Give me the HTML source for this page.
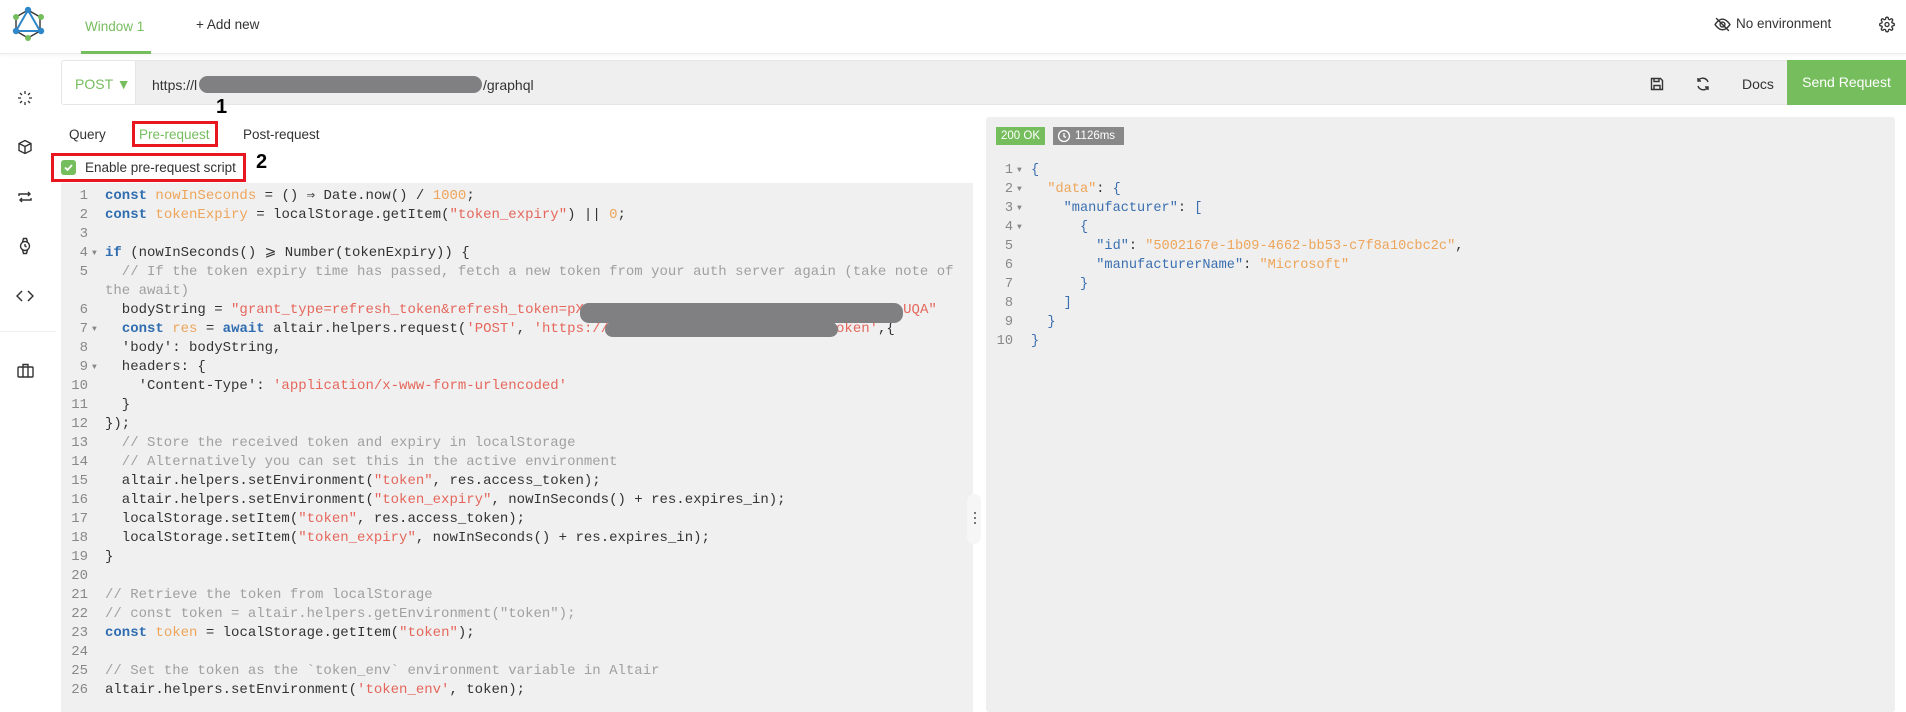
<!DOCTYPE html>
<html><head><meta charset="utf-8"><style>
*{box-sizing:border-box;margin:0;padding:0}
body{width:1906px;height:712px;overflow:hidden;background:#fff;font-family:"Liberation Sans",sans-serif;color:#333;position:relative}
.a{position:absolute}
.code{font-family:"Liberation Mono",monospace;font-size:14px;color:#333}
.r{position:relative;height:19px;line-height:19px;white-space:pre;padding-left:44px}
.k{color:#2f6db0;font-weight:bold}.v{color:#eea55a}.s{color:#e5675c}.c{color:#a0a0a0}.n{color:#eea55a}.b{color:#3b6fb0}
.ln{position:absolute;left:0;width:27px;text-align:right;color:#888}
.ar{position:absolute;left:31px;color:#888;font-size:8px}
.red{border:3px solid #e8161f;position:absolute}
.blk{background:#808083;position:absolute;border-radius:9px}
</style></head><body>
<div class="a" style="left:0;top:0;width:1906px;height:54px;border-bottom:1px solid #ececec;box-shadow:0 2px 4px rgba(0,0,0,.04)"></div>
<svg class="a" style="left:0;top:0" width="60" height="50">
<polygon points="28,10 40,17 40,31 28,38 16,31 16,17" fill="none" stroke="#333" stroke-width="1.4"/>
<polygon points="28,10 40,31 16,31" fill="none" stroke="#2f86c8" stroke-width="2"/>
<circle cx="28" cy="10" r="3.2" fill="#2f86c8"/><circle cx="16" cy="31" r="3.2" fill="#2f86c8"/><circle cx="41" cy="31" r="3.2" fill="#2f86c8"/>
<circle cx="16" cy="17" r="3" fill="#76bd5e"/><circle cx="41" cy="17" r="3" fill="#76bd5e"/><circle cx="28" cy="38" r="3" fill="#76bd5e"/>
</svg>
<div class="a" style="left:85px;top:19px;font-size:13.5px;color:#76bd5e">Window 1</div>
<div class="a" style="left:81px;top:51px;width:70px;height:3px;background:#76bd5e"></div>
<div class="a" style="left:196px;top:17px;font-size:13.5px;color:#333">+ Add new</div>
<svg class="a" style="left:1714px;top:16px" width="17" height="17" viewBox="0 0 16 16" fill="none" stroke="#333" stroke-width="1.3"><path d="M1 8s3-5 7-5 7 5 7 5-3 5-7 5-7-5-7-5z"/><circle cx="8" cy="8" r="2.3"/><path d="M2 2l12 12"/></svg>
<div class="a" style="left:1736px;top:16px;font-size:13.5px">No environment</div>
<svg class="a" style="left:1879px;top:16px" width="16" height="17" viewBox="0 0 24 24" fill="none" stroke="#333" stroke-width="2"><circle cx="12" cy="12" r="3"/><path d="M19.4 15a1.7 1.7 0 0 0 .3 1.8l.1.1a2 2 0 1 1-2.8 2.8l-.1-.1a1.7 1.7 0 0 0-1.8-.3 1.7 1.7 0 0 0-1 1.5V21a2 2 0 1 1-4 0v-.1a1.7 1.7 0 0 0-1.1-1.5 1.7 1.7 0 0 0-1.8.3l-.1.1a2 2 0 1 1-2.8-2.8l.1-.1a1.7 1.7 0 0 0 .3-1.8 1.7 1.7 0 0 0-1.5-1H3a2 2 0 1 1 0-4h.1a1.7 1.7 0 0 0 1.5-1.1 1.7 1.7 0 0 0-.3-1.8l-.1-.1a2 2 0 1 1 2.8-2.8l.1.1a1.7 1.7 0 0 0 1.8.3H9a1.7 1.7 0 0 0 1-1.5V3a2 2 0 1 1 4 0v.1a1.7 1.7 0 0 0 1 1.5 1.7 1.7 0 0 0 1.8-.3l.1-.1a2 2 0 1 1 2.8 2.8l-.1.1a1.7 1.7 0 0 0-.3 1.8V9a1.7 1.7 0 0 0 1.5 1H21a2 2 0 1 1 0 4h-.1a1.7 1.7 0 0 0-1.5 1z"/></svg>
<svg class="a" style="left:17px;top:90px" width="16" height="16" viewBox="0 0 16 16" stroke="#333" stroke-width="1.3"><path d="M8 1v3M8 12v3M1 8h3M12 8h3M3 3l2 2M11 11l2 2M3 13l2-2M11 5l2-2"/></svg>
<svg class="a" style="left:17px;top:139px" width="16" height="16" viewBox="0 0 16 16" fill="none" stroke="#333" stroke-width="1.4"><path d="M8 1.5l6 3v7l-6 3-6-3v-7z M2 4.5l6 3 6-3 M8 7.5v7"/></svg>
<svg class="a" style="left:17px;top:189px" width="16" height="16" viewBox="0 0 16 16" fill="none" stroke="#333" stroke-width="1.4"><path d="M2 7V5h11M11 3l2 2-2 2M14 9v2H3M5 13l-2-2 2-2"/></svg>
<svg class="a" style="left:18px;top:237px" width="14" height="18" viewBox="0 0 14 18" fill="none" stroke="#333" stroke-width="1.4"><circle cx="7" cy="9" r="4.5"/><path d="M7 7v2l1.5 1M4.5 5l1-3.5h3l1 3.5M4.5 13l1 3.5h3l1-3.5"/></svg>
<svg class="a" style="left:16px;top:290px" width="18" height="12" viewBox="0 0 18 12" fill="none" stroke="#333" stroke-width="1.5"><path d="M6 1L1 6l5 5M12 1l5 5-5 5"/></svg>
<div class="a" style="left:0;top:331px;width:56px;height:1px;background:#eee"></div>
<svg class="a" style="left:17px;top:363px" width="17" height="15" viewBox="0 0 17 15" fill="none" stroke="#333" stroke-width="1.4"><rect x="1" y="4" width="15" height="10" rx="1"/><path d="M6 4V1.5h5V4M6 4v10M11 4v10"/></svg>
<div class="a" style="left:61px;top:60px;width:1845px;height:45px;background:#efefef;border:1px solid #e6e6e6;border-radius:3px 0 0 3px"></div>
<div class="a" style="left:61px;top:60px;width:75px;height:45px;background:#fff;border:1px solid #e6e6e6;border-radius:3px 0 0 3px"></div>
<div class="a" style="left:75px;top:76px;font-size:14px;color:#76bd5e">POST ▼</div>
<div class="a" style="left:152px;top:77px;font-size:14px;color:#333">https://l</div>
<div class="blk" style="left:199px;top:76px;width:283px;height:17px"></div>
<div class="a" style="left:483px;top:77px;font-size:14px;color:#333">/graphql</div>
<svg class="a" style="left:1650px;top:77px" width="14" height="14" viewBox="0 0 14 14" fill="none" stroke="#333" stroke-width="1.4"><path d="M1.5 1.5h9l2 2v9h-11z M4 1.5v3h5v-3 M4 12.5v-4h6v4"/></svg>
<svg class="a" style="left:1695px;top:76px" width="16" height="16" viewBox="0 0 16 16" fill="none" stroke="#333" stroke-width="1.4"><path d="M13 6A5.5 5.5 0 0 0 3 5M3 2v3h3M3 10a5.5 5.5 0 0 0 10 1M13 14v-3h-3"/></svg>
<div class="a" style="left:1742px;top:76px;font-size:14px">Docs</div>
<div class="a" style="left:1787px;top:60px;width:119px;height:45px;background:#76bd5e;color:#fff;font-size:14px;text-align:center;line-height:45px">Send Request</div>
<div class="a" style="left:69px;top:127px;font-size:13.5px">Query</div>
<div class="a" style="left:139px;top:127px;font-size:13.5px;color:#76bd5e">Pre-request</div>
<div class="a" style="left:243px;top:127px;font-size:13.5px">Post-request</div>
<div class="red" style="left:132px;top:121px;width:86px;height:26px"></div>
<div class="a" style="left:216px;top:96px;font-size:20px;font-weight:bold;color:#000">1</div>
<div class="red" style="left:51px;top:153px;width:195px;height:29px"></div>
<div class="a" style="left:256px;top:151px;font-size:20px;font-weight:bold;color:#000">2</div>
<div class="a" style="left:61px;top:160px;width:15px;height:15px;background:#76bd5e;border-radius:3px"></div>
<svg class="a" style="left:61px;top:160px" width="15" height="15"><path d="M4 7.5l2.5 2.5 4.5-5" fill="none" stroke="#fff" stroke-width="1.8"/></svg>
<div class="a" style="left:85px;top:160px;font-size:13.5px">Enable pre-request script</div>
<div class="a" style="left:61px;top:183px;width:912px;height:529px;background:#f0f0f0"></div>
<div class="a code" style="left:61px;top:187px;width:912px">
<div class="r"><span class="ln">1</span><span class="k">const</span> <span class="v">nowInSeconds</span> = () ⇒ Date.now() / <span class="n">1000</span>;</div>
<div class="r"><span class="ln">2</span><span class="k">const</span> <span class="v">tokenExpiry</span> = localStorage.getItem(<span class="s">"token_expiry"</span>) || <span class="n">0</span>;</div>
<div class="r"><span class="ln">3</span></div>
<div class="r"><span class="ln">4</span><span class="ar">▼</span><span class="k">if</span> (nowInSeconds() ⩾ Number(tokenExpiry)) {</div>
<div class="r"><span class="ln">5</span><span class="c">  // If the token expiry time has passed, fetch a new token from your auth server again (take note of</span></div>
<div class="r"><span class="c">the await)</span></div>
<div class="r"><span class="ln">6</span>  bodyString = <span class="s">"grant_type=refresh_token&amp;refresh_token=pX                                      UQA"</span></div>
<div class="r"><span class="ln">7</span><span class="ar">▼</span>  <span class="k">const</span> <span class="v">res</span> = <span class="k">await</span> altair.helpers.request(<span class="s">'POST'</span>, <span class="s">'https://                          token'</span>,{</div>
<div class="r"><span class="ln">8</span>  'body': bodyString,</div>
<div class="r"><span class="ln">9</span><span class="ar">▼</span>  headers: {</div>
<div class="r"><span class="ln">10</span>    'Content-Type': <span class="s">'application/x-www-form-urlencoded'</span></div>
<div class="r"><span class="ln">11</span>  }</div>
<div class="r"><span class="ln">12</span>});</div>
<div class="r"><span class="ln">13</span><span class="c">  // Store the received token and expiry in localStorage</span></div>
<div class="r"><span class="ln">14</span><span class="c">  // Alternatively you can set this in the active environment</span></div>
<div class="r"><span class="ln">15</span>  altair.helpers.setEnvironment(<span class="s">"token"</span>, res.access_token);</div>
<div class="r"><span class="ln">16</span>  altair.helpers.setEnvironment(<span class="s">"token_expiry"</span>, nowInSeconds() + res.expires_in);</div>
<div class="r"><span class="ln">17</span>  localStorage.setItem(<span class="s">"token"</span>, res.access_token);</div>
<div class="r"><span class="ln">18</span>  localStorage.setItem(<span class="s">"token_expiry"</span>, nowInSeconds() + res.expires_in);</div>
<div class="r"><span class="ln">19</span>}</div>
<div class="r"><span class="ln">20</span></div>
<div class="r"><span class="ln">21</span><span class="c">// Retrieve the token from localStorage</span></div>
<div class="r"><span class="ln">22</span><span class="c">// const token = altair.helpers.getEnvironment("token");</span></div>
<div class="r"><span class="ln">23</span><span class="k">const</span> <span class="v">token</span> = localStorage.getItem(<span class="s">"token"</span>);</div>
<div class="r"><span class="ln">24</span></div>
<div class="r"><span class="ln">25</span><span class="c">// Set the token as the `token_env` environment variable in Altair</span></div>
<div class="r"><span class="ln">26</span>altair.helpers.setEnvironment(<span class="s">'token_env'</span>, token);</div>
</div>
<div class="blk" style="left:580px;top:303px;width:323px;height:20px"></div>
<div class="blk" style="left:605px;top:322px;width:233px;height:15px;border-radius:8px"></div>
<div class="a" style="left:967px;top:494px;width:14px;height:50px;background:#f6f6f6;border-radius:7px"></div>
<div class="a" style="left:974px;top:512px;width:2px;height:2px;background:#777;box-shadow:0 5px 0 #777,0 10px 0 #777"></div>
<div class="a" style="left:986px;top:117px;width:909px;height:595px;background:#efefef;border-radius:3px"></div>
<div class="a" style="left:996px;top:127px;width:49px;height:18px;background:#76bd5e;color:#fff;font-size:11.5px;line-height:18px;text-align:center">200 OK</div>
<div class="a" style="left:1053px;top:127px;width:71px;height:18px;background:#888;color:#fff;font-size:11.5px;line-height:18px;padding-left:22px">1126ms</div>
<svg class="a" style="left:1057px;top:129px" width="14" height="14" viewBox="0 0 14 14" fill="none" stroke="#fff" stroke-width="1.3"><circle cx="7" cy="7" r="5.5"/><path d="M7 4v3.5l2 1"/></svg>
<div class="a code" style="left:986px;top:161px;font-size:13.6px">
<div class="r" style="padding-left:45px"><span class="ln">1</span><span class="ar">▼</span><span class="b">{</span></div>
<div class="r" style="padding-left:45px"><span class="ln">2</span><span class="ar">▼</span>  <span class="v">"data"</span>: <span class="b">{</span></div>
<div class="r" style="padding-left:45px"><span class="ln">3</span><span class="ar">▼</span>    <span class="b">"manufacturer"</span>: <span class="b">[</span></div>
<div class="r" style="padding-left:45px"><span class="ln">4</span><span class="ar">▼</span>      <span class="b">{</span></div>
<div class="r" style="padding-left:45px"><span class="ln">5</span>        <span class="b">"id"</span>: <span class="v">"5002167e-1b09-4662-bb53-c7f8a10cbc2c"</span>,</div>
<div class="r" style="padding-left:45px"><span class="ln">6</span>        <span class="b">"manufacturerName"</span>: <span class="v">"Microsoft"</span></div>
<div class="r" style="padding-left:45px"><span class="ln">7</span>      <span class="b">}</span></div>
<div class="r" style="padding-left:45px"><span class="ln">8</span>    <span class="b">]</span></div>
<div class="r" style="padding-left:45px"><span class="ln">9</span>  <span class="b">}</span></div>
<div class="r" style="padding-left:45px"><span class="ln">10</span><span class="b">}</span></div>
</div>
</body></html>
